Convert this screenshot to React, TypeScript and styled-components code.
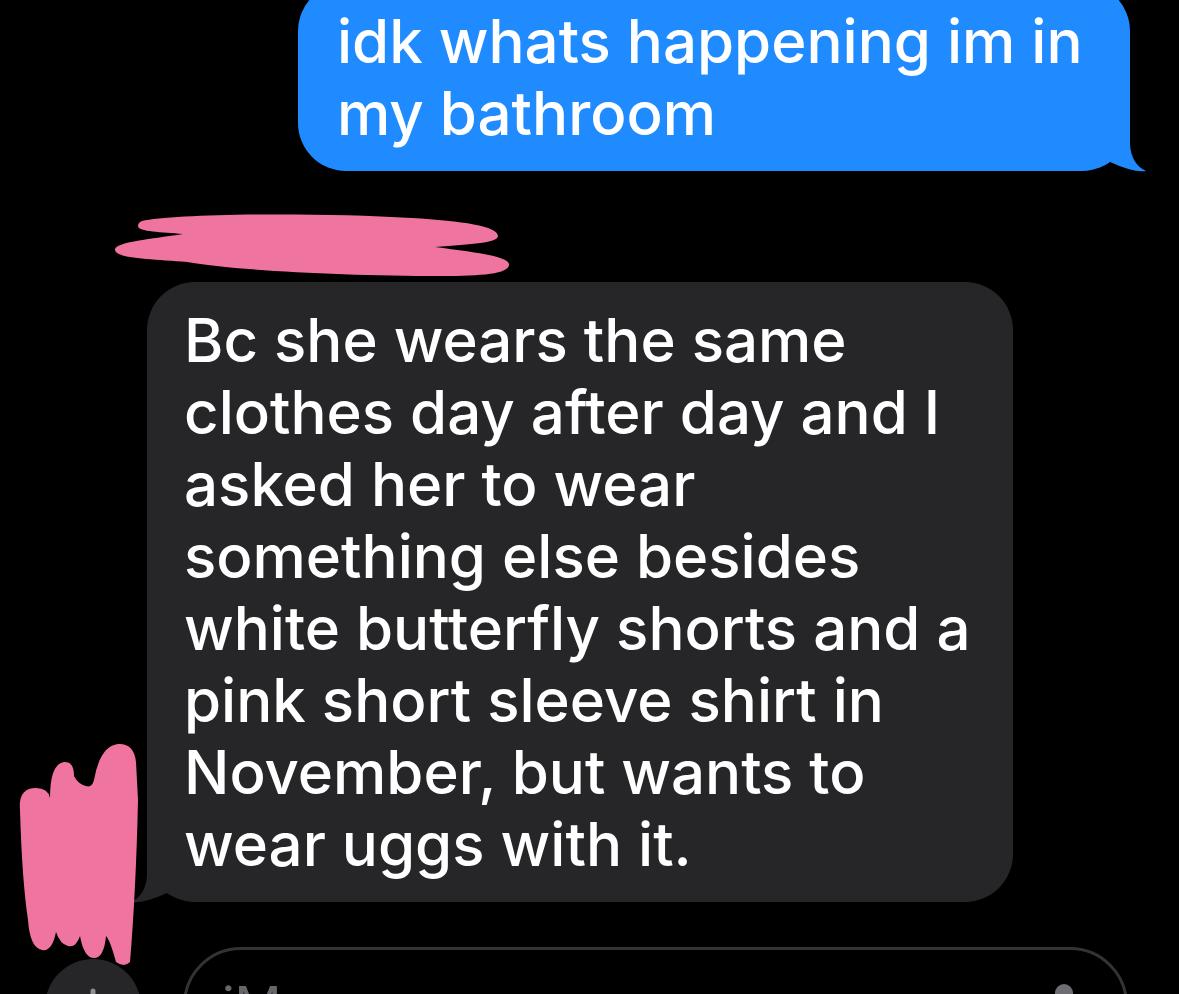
import styled, { createGlobalStyle } from "styled-components";

const GlobalStyle = createGlobalStyle`
  html, body {
    margin: 0;
    padding: 0;
    background: #000;
    overflow: hidden;
  }
  * {
    box-sizing: border-box;
  }
`;

const BLUE = "#1f8bff";
const GRAY = "#262629";
const PINK = "#ef74a0";

const Screen = styled.div`
  position: relative;
  width: 1179px;
  height: 994px;
  overflow: hidden;
  background: #000;
  font-family: Inter, "Liberation Sans", Arial, sans-serif;
  display: flex;
  flex-direction: column;
`;

const OutgoingRow = styled.div`
  display: flex;
  justify-content: flex-end;
  padding-right: 49px;
  margin-top: -17px;
`;

const IncomingRow = styled.div`
  display: flex;
  padding-left: 147px;
`;

const Bubble = styled.div<{ $mine?: boolean; $width: number }>`
  position: relative;
  width: ${(p) => p.$width}px;
  padding: 22px 30px 22px ${(p) => (p.$mine ? 39 : 37)}px;
  border-radius: 48px;
  background: ${(p) => (p.$mine ? BLUE : GRAY)};
  color: #fff;
  font-size: 60px;
  line-height: 72px;
  font-weight: 500;
  white-space: pre-line;
`;

const TailSvg = styled.svg<{ $mine?: boolean }>`
  position: absolute;
  bottom: 0;
  overflow: visible;
  ${(p) => (p.$mine ? "right: -18px;" : "left: -18px; transform: scaleX(-1);")}
`;

const NameRow = styled.div`
  height: 113px;
  padding: 41px 0 0 112px;
`;

const Composer = styled.div`
  display: flex;
  align-items: center;
  gap: 42px;
  margin-top: 45px;
  padding-left: 45px;
`;

const PlusButton = styled.div`
  flex: none;
  width: 96px;
  height: 96px;
  border-radius: 50%;
  background: #262628;
  display: flex;
  align-items: center;
  justify-content: center;
`;

const InputField = styled.div`
  position: relative;
  width: 945px;
  height: 120px;
  border: 3px solid #333335;
  border-radius: 58px;
  padding: 26px 0 0 36px;
  color: #67676b;
  font-size: 52px;
  line-height: 60px;
`;

const MicDot = styled.span`
  position: absolute;
  top: 34px;
  right: 52px;
  width: 18px;
  height: 36px;
  border-radius: 9px;
  background: #6e6e72;
`;

const Scribble = styled.svg`
  position: absolute;
  left: 14px;
  top: 740px;
  z-index: 2;
`;

const incoming = `Bc she wears the same
clothes day after day and I
asked her to wear
something else besides
white butterfly shorts and a
pink short sleeve shirt in
November, but wants to
wear uggs with it.`;

function Tail({ mine }: { mine?: boolean }) {
  return (
    <TailSvg $mine={mine} width="40" height="50" viewBox="0 0 40 50">
      <path
        d="M22 2 L22 23 Q23 43 38 50 Q26 52 2 41 Z"
        fill={mine ? BLUE : GRAY}
      />
    </TailSvg>
  );
}

function NameRedaction() {
  return (
    <svg width="400" height="66" viewBox="0 0 400 66">
      <path
        fill={PINK}
        d="M30 9 C60 2 200 0 300 6 C350 9 386 14 386 24 C386 31 360 32 323 35
           C360 40 396 44 397 52 C398 62 370 64 330 64 C230 64 120 58 75 50
           C40 47 5 47 3 38 C2 30 40 27 71 22 C50 20 26 20 26 14 C26 11 28 10 30 9 Z"
      />
    </svg>
  );
}

function AvatarRedaction() {
  return (
    <Scribble width="130" height="232" viewBox="0 0 130 232">
      <path
        fill={PINK}
        d="M6 70 Q4 48 22 48 Q34 48 36 58 Q36 24 50 22 Q60 21 60 36 Q64 44 72 46
           Q78 48 80 40 Q86 6 104 4 Q120 3 122 22 L124 60 Q122 150 116 222
           Q110 228 102 222 Q96 200 92 196 Q90 218 80 218 Q70 218 66 196
           Q62 208 54 206 Q46 204 42 192 Q38 212 28 210 Q16 208 14 180 Q8 140 6 70 Z"
      />
    </Scribble>
  );
}

export default function App() {
  return (
    <>
      <GlobalStyle />
      <Screen>
        <OutgoingRow>
          <Bubble $mine $width={832}>
            {"idk whats happening im in\nmy bathroom"}
            <Tail mine />
          </Bubble>
        </OutgoingRow>
        <NameRow>
          <NameRedaction />
        </NameRow>
        <IncomingRow>
          <Bubble $width={866}>
            {incoming}
            <Tail />
          </Bubble>
        </IncomingRow>
        <Composer>
          <PlusButton>
            <svg width="40" height="40" viewBox="0 0 40 40">
              <path d="M20 4v32M4 20h32" stroke="#8e8e93" strokeWidth="5" strokeLinecap="round" />
            </svg>
          </PlusButton>
          <InputField>
            iMessage
            <MicDot />
          </InputField>
        </Composer>
        <AvatarRedaction />
      </Screen>
    </>
  );
}
